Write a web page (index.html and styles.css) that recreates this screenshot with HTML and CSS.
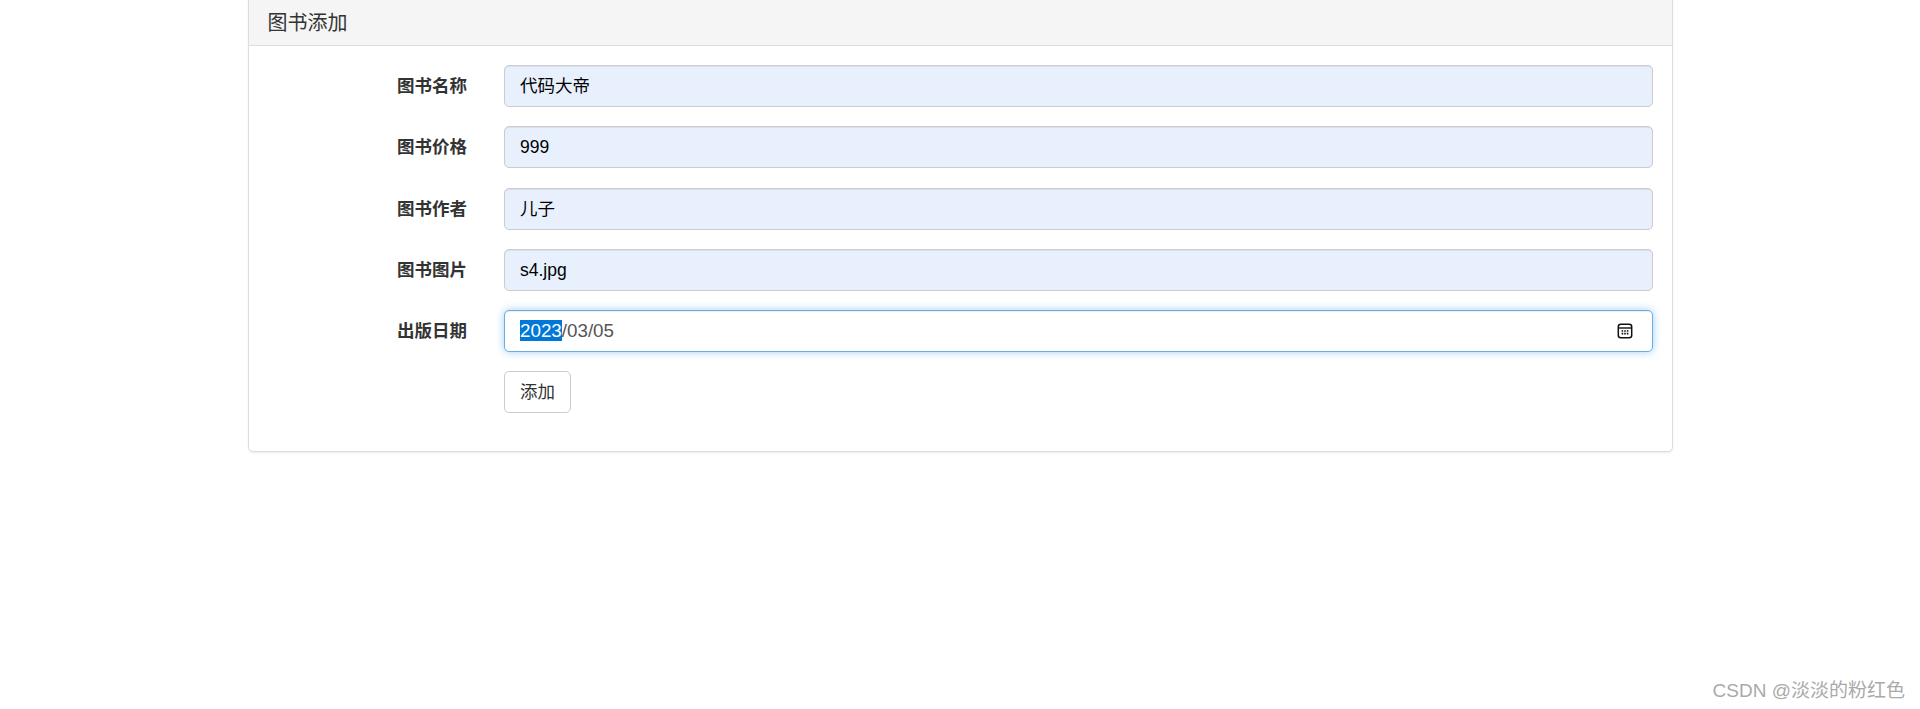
FILE: index.html
```html
<!DOCTYPE html>
<html lang="zh-CN">
<head>
    <meta charset="UTF-8">
    <meta name="viewport" content="width=device-width, initial-scale=1.0">
    <title>图书添加</title>
    <link rel="stylesheet" href="styles.css">
</head>
<body>
    <div class="panel">
        <div class="panel-heading">图书添加</div>
        <form class="panel-body">
            <label class="form-label">图书名称</label>
            <div class="form-control autofill">代码大帝</div>

            <label class="form-label">图书价格</label>
            <div class="form-control autofill">999</div>

            <label class="form-label">图书作者</label>
            <div class="form-control autofill">儿子</div>

            <label class="form-label">图书图片</label>
            <div class="form-control autofill">s4.jpg</div>

            <label class="form-label">出版日期</label>
            <div class="form-control date-field">
                <span class="date-value"><span class="selected">2023</span>/03/05</span>
                <svg class="calendar-icon" width="16" height="16" viewBox="0 0 16 16">
                    <rect x="1.3" y="1.3" width="13.4" height="13.4" rx="2.5" fill="none" stroke="#111" stroke-width="1.5"/>
                    <path d="M2 5h12" stroke="#111" stroke-width="1.4"/>
                    <path d="M4.6 8h1.6M7.2 8h1.6M9.8 8h1.6M4.6 10.6h1.6M7.2 10.6h1.6M9.8 10.6h1.6" stroke="#111" stroke-width="1.6"/>
                </svg>
            </div>

            <div class="form-actions">
                <button type="button" class="btn">添加</button>
            </div>
        </form>
    </div>

    <div class="watermark">CSDN @淡淡的粉红色</div>
</body>
</html>
```

FILE: styles.css
```css
html, body {
    height: 100%;
}
body {
    margin: 0;
    background: white;
    color: #333;
    font-family: "Liberation Sans", "Noto Sans CJK SC", sans-serif;
    font-size: 17.5px;
    overflow: hidden;
    position: relative;
}
.panel {
    box-sizing: border-box;
    width: 1425px;
    margin: -20px 0 0 248px;
    background: white;
    border: 1px solid #ddd;
    border-radius: 5px;
    box-shadow: 0 1px 2px rgba(0,0,0,0.08);
}
.panel-heading {
    box-sizing: border-box;
    height: 65px;
    padding: 20px 18.5px 0;
    line-height: 44px;
    font-size: 20px;
    background: #f5f5f5;
    border-bottom: 1px solid #ddd;
}
.panel-body {
    display: grid;
    grid-template-columns: 218px 1149px;
    column-gap: 37px;
    row-gap: 19.25px;
    padding: 19px 0 38px;
    align-items: center;
}
.form-label {
    font-weight: bold;
    text-align: right;
    padding-bottom: 3px;
}
.form-control {
    box-sizing: border-box;
    height: 42px;
    line-height: 40px;
    padding: 0 15px;
    border: 1px solid #ccc;
    border-radius: 5px;
    color: #000;
    box-shadow: inset 0 1px 1px rgba(0,0,0,0.075);
}
.autofill {
    background: #e8f0fe;
}
.date-field {
    display: flex;
    align-items: center;
    justify-content: space-between;
    color: #555;
    background: white;
    border-color: #66afe9;
    box-shadow: inset 0 1px 1px rgba(0,0,0,0.075), 0 0 8px rgba(102,175,233,0.6);
}
.date-value {
    font-size: 18.8px;
    line-height: 21px;
    padding-bottom: 1px;
}
.selected {
    background: #0078d7;
    color: white;
}
.calendar-icon {
    margin-right: 4px;
}
.form-actions {
    grid-column: 2;
}
.btn {
    display: block;
    box-sizing: border-box;
    width: 67px;
    height: 42px;
    padding: 0 0 3px;
    background: white;
    border: 1px solid #ccc;
    border-radius: 5px;
    color: #333;
    font: inherit;
}
.watermark {
    position: absolute;
    right: 15px;
    bottom: 7px;
    color: #aaa;
    font-size: 19px;
}
```
